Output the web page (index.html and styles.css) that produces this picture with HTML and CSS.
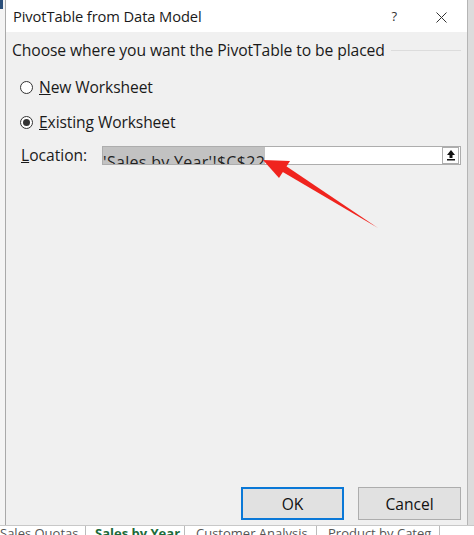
FILE: index.html
```html
<!DOCTYPE html>
<html>
<head>
<meta charset="utf-8">
<link rel="stylesheet" href="styles.css">
</head>
<body>
<div class="screen">
  <div class="main">
    <div class="side-left"><div class="corner"></div></div>
    <div class="dialog">
      <div class="titlebar">
        <span class="title">PivotTable from Data Model</span>
        <span class="help">?</span>
        <span class="close">
          <svg width="11" height="11" viewBox="0 0 11 11"><path d="M0.5 0.5 L10.5 10.5 M10.5 0.5 L0.5 10.5" stroke="#333" stroke-width="1" fill="none"/></svg>
        </span>
      </div>
      <div class="body">
        <div class="group-head">
          <span class="group-label">Choose where you want the PivotTable to be placed</span>
          <span class="group-line"></span>
        </div>
        <div class="radio-row first">
          <span class="radio"></span>
          <span class="radio-text"><u>N</u>ew Worksheet</span>
        </div>
        <div class="radio-row">
          <span class="radio checked"><span class="dot"></span></span>
          <span class="radio-text"><u>E</u>xisting Worksheet</span>
        </div>
        <div class="loc-row">
          <span class="loc-label"><u>L</u>ocation:</span>
          <div class="loc-input">
            <span class="loc-text"><span class="sel">'Sales by Year'!$C$22</span></span>
            <span class="collapse">
              <svg width="12" height="12" viewBox="0 0 12 12"><path d="M6 1 L10 6 L7.5 6 L7.5 9 L4.5 9 L4.5 6 L2 6 Z" fill="#111"/><rect x="2" y="10" width="8" height="1.5" fill="#111"/></svg>
            </span>
          </div>
        </div>
        <div class="spacer"></div>
        <div class="buttons">
          <button class="btn default">OK</button>
          <button class="btn">Cancel</button>
        </div>
      </div>
    </div>
    <div class="side-right"></div>
  </div>
  <div class="tabs">
    <span class="tab t1">Sales Quotas</span>
    <span class="tab active t2">Sales by Year</span>
    <span class="tab t3">Customer Analysis</span>
    <span class="tab t4">Product by Categ ...</span>
    <span class="tab t5"></span>
  </div>
  <svg class="arrow" width="474" height="535" viewBox="0 0 474 535">
    <path d="M263 160 L290 161 L279 178 Z" fill="#f0241e"/>
    <path d="M378 228 L276 168 L280 162 Z" fill="#f0241e"/>
  </svg>
</div>
</body>
</html>
```
FILE: styles.css
```css
* { box-sizing: border-box; }
html, body { margin: 0; padding: 0; }
body {
  width: 474px;
  height: 535px;
  overflow: hidden;
  background: #fff;
  font-family: "Open Sans", "Noto Sans", sans-serif;
  color: #1a1a1a;
}
.screen {
  position: relative;
  width: 474px;
  height: 535px;
  display: flex;
  flex-direction: column;
}
.main {
  display: flex;
  height: 525px;
}
.side-left {
  width: 6px;
  background: #f4f4f4;
  border-right: 1px solid #a9a9a9;
}
.corner {
  width: 3px;
  height: 9px;
  background: #2b4f7a;
}
.side-right {
  width: 7px;
  background: #dcdcdc;
  border-left: 1px solid #b5b5b5;
}
.dialog {
  width: 461px;
  display: flex;
  flex-direction: column;
  background: #f0f0f0;
}
.titlebar {
  height: 32px;
  background: #fff;
  display: flex;
  align-items: center;
  padding-left: 7px;
  padding-right: 20px;
}
.title {
  font-size: 14.7px;
  letter-spacing: -0.1px;
  flex: 1;
}
.help {
  font-size: 13px;
  color: #333;
  margin-right: 39px;
}
.close {
  display: flex;
  align-items: center;
  padding-top: 2px;
}
.body {
  flex: 1;
  display: flex;
  flex-direction: column;
  padding: 6px 6px 5px 6px;
}
.group-head {
  display: flex;
  align-items: center;
  height: 24px;
}
.group-label {
  font-size: 15.7px;
  letter-spacing: -0.1px;
  white-space: nowrap;
}
.group-line {
  flex: 1;
  height: 1px;
  background: #dcdcdc;
  margin: 1px 0 0 6px;
}
.radio-row {
  display: flex;
  align-items: center;
  height: 24px;
  margin-top: 11px;
  padding-left: 8px;
}
.radio-row.first { margin-top: 13px; }
.radio {
  width: 13px;
  height: 13px;
  border: 1px solid #333;
  border-radius: 50%;
  background: #fff;
  display: flex;
  align-items: center;
  justify-content: center;
  margin-right: 6px;
}
.radio .dot {
  width: 7px;
  height: 7px;
  border-radius: 50%;
  background: #333;
}
.radio-text {
  font-size: 15.6px;
  letter-spacing: -0.1px;
}
.loc-row {
  display: flex;
  align-items: center;
  margin-top: 10px;
  padding-left: 9px;
}
.loc-label {
  font-size: 15.6px;
  width: 82px;
}
.loc-input {
  width: 363px;
  height: 19px;
  background: #fff;
  border: 1px solid #adadad;
  display: flex;
  align-items: flex-start;
  overflow: hidden;
}
.loc-text {
  flex: 1;
  height: 17px;
  overflow: hidden;
}
.sel {
  display: inline-block;
  background: #c2c2c2;
  color: #222;
  font-size: 16px;
  line-height: 17px;
  padding-top: 7px;
  height: 17px;
  white-space: nowrap;
  letter-spacing: 0.3px;
}
.collapse {
  width: 17px;
  height: 17px;
  border: 1px solid #adadad;
  background: #fdfdfd;
  display: flex;
  align-items: center;
  justify-content: center;
  margin-right: 1px;
}
.spacer { flex: 1; }
.buttons {
  display: flex;
  justify-content: flex-end;
  gap: 14px;
}
.btn {
  width: 103px;
  height: 33px;
  background: #e1e1e1;
  border: 1px solid #adadad;
  font-family: "Open Sans", "Noto Sans", sans-serif;
  font-size: 15.6px;
  color: #111;
  padding: 0;
}
.btn.default {
  border: 2px solid #0a78d7;
}
.tabs {
  height: 10px;
  overflow: hidden;
  background: #fff;
  display: flex;
  align-items: flex-start;
  border-top: 1px solid #c8c8c8;
}
.tab {
  font-size: 13px;
  line-height: 13px;
  color: #555;
  white-space: nowrap;
  padding-top: 1px;
  height: 10px;
  border-right: 1px solid #bbb;
  overflow: hidden;
}
.t1 { width: 86px; }
.t2 { width: 99px; padding-left: 9px; color: #1d6b3a; font-weight: bold; }
.t3 { width: 132px; padding-left: 11px; }
.t4 { width: 123px; padding-left: 11px; }
.t5 { width: 34px; border-right: none; }
.arrow {
  position: absolute;
  left: 0;
  top: 0;
  pointer-events: none;
}
```
